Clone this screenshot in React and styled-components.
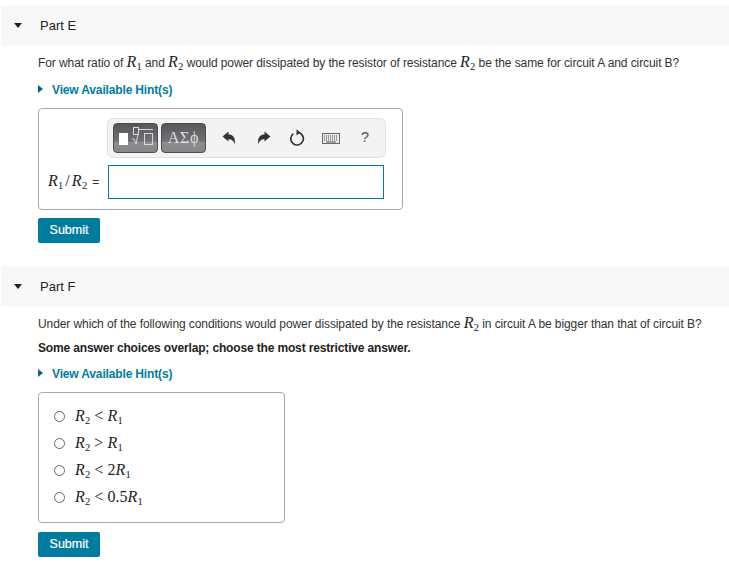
import React from 'react'
import styled, { createGlobalStyle } from 'styled-components'

const GlobalStyle = createGlobalStyle`
  html, body {
    margin: 0;
    background: #fff;
    font-family: "Liberation Sans", Arial, sans-serif;
    color: #333;
  }
`;

const Page = styled.div`
  width: 729px;
  height: 566px;
  overflow: hidden;
  padding-top: 5px;
  box-sizing: border-box;
`;

const PartHeader = styled.div`
  display: flex;
  align-items: center;
  height: 41px;
  margin-left: 1px;
  background: #f8f8f8;
  color: #222;
  font-size: 13px;
  padding-left: 13px;
`;

const Caret = styled.span`
  width: 0;
  height: 0;
  margin-right: 18px;
  margin-top: -1px;
  border-left: 4.5px solid transparent;
  border-right: 4.5px solid transparent;
  border-top: 5px solid #222;
`;

const PartBody = styled.div`
  padding-left: 38px;
  margin-bottom: ${p => p.$gap}px;
`;

const Prompt = styled.p`
  margin: 0;
  height: 17px;
  line-height: 17px;
  font-size: 12px;
  letter-spacing: ${p => (p.$bold ? -0.15 : -0.09)}px;
  font-weight: ${p => (p.$bold ? 700 : 400)};
  color: ${p => (p.$bold ? '#222' : '#333')};
  margin-top: ${p => p.$top}px;
  white-space: nowrap;
`;

const Hint = styled.div`
  display: flex;
  align-items: center;
  height: 16px;
  margin-top: ${p => p.$top}px;
  color: #007c9e;
  font-size: 12px;
  letter-spacing: -0.15px;
  font-weight: 700;
`;

const HintArrow = styled.span`
  width: 0;
  height: 0;
  margin-right: 9px;
  margin-top: -2px;
  border-top: 4.5px solid transparent;
  border-bottom: 4.5px solid transparent;
  border-left: 5px solid #00688b;
`;

const MathText = styled.span`
  font-family: "Liberation Serif", "Times New Roman", serif;
  font-size: ${p => p.$size || 16}px;
  line-height: 0;
  letter-spacing: 0;
  color: #222;
  white-space: nowrap;
  i { font-style: italic; letter-spacing: 0.3px; }
  sub {
    font-size: 0.66em;
    line-height: 0;
    vertical-align: -0.26em;
    font-style: normal;
  }
`;

const Op = styled.span`
  margin: 0 ${p => p.$space || 4}px;
`;

const AnswerBox = styled.div`
  box-sizing: border-box;
  width: ${p => p.$w}px;
  height: ${p => p.$h}px;
  margin-top: ${p => p.$top}px;
  border: 1px solid #a8a8a8;
  border-radius: 4px;
`;

const EditorGrid = styled.div`
  display: grid;
  grid-template-columns: 69px 276px;
  padding-top: 9px;
`;

const Toolbar = styled.div`
  grid-column: 2;
  box-sizing: border-box;
  width: 279px;
  height: 40px;
  margin-left: -1px;
  display: flex;
  align-items: center;
  padding-left: 5px;
  background: #f3f3f3;
  border: 1px solid #e0e0e0;
  border-radius: 6px;
`;

const PaletteButton = styled.div`
  box-sizing: border-box;
  width: 45px;
  height: 30px;
  margin-right: 3px;
  display: flex;
  align-items: center;
  justify-content: center;
  border: 1px solid #4f4f4f;
  border-radius: 4px;
  background: linear-gradient(#58585c 0%, #727276 62%, #8d8d92 64%, #85858a 100%);
  color: #dedede;
  font-family: "Liberation Serif", serif;
  font-size: 16px;
  letter-spacing: 0.8px;
  font-weight: 400;
`;

const ToolIcon = styled.span`
  width: ${p => p.$w}px;
  margin-top: ${p => p.$lift ? -p.$lift : 0}px;
  display: flex;
  justify-content: center;
  align-items: center;
  color: #555;
  font-size: 15px;
`;

const EquationLabel = styled.div`
  align-self: center;
  padding-left: 9px;
  font-size: 12px;
  white-space: nowrap;
`;

const EquationInput = styled.div`
  box-sizing: border-box;
  width: 276px;
  height: 34px;
  border: 1px solid #007c9e;
`;

const EquationRow = styled.div`
  grid-column: 1 / 3;
  display: grid;
  grid-template-columns: 69px 276px;
  margin-top: 7px;
`;

const SubmitButton = styled.button`
  display: block;
  box-sizing: border-box;
  width: 62px;
  height: 25px;
  margin-top: ${p => p.$top}px;
  padding: 0 0 2px;
  background: #007c9e;
  border: none;
  border-radius: 2px;
  color: #fff;
  font-family: "Liberation Sans", Arial, sans-serif;
  font-size: 12.5px;
  font-weight: 400;
  -webkit-text-stroke: 0.2px #fff;
`;

const ChoiceList = styled.div`
  display: flex;
  flex-direction: column;
  padding: 12px 0 0 15px;
`;

const Choice = styled.label`
  display: flex;
  align-items: center;
  height: 27px;
`;

const Radio = styled.span`
  box-sizing: border-box;
  width: 11px;
  height: 11px;
  margin-right: 10px;
  margin-top: -4px;
  border: 1.3px solid #666;
  border-radius: 50%;
  background: #fff;
`;

const MatrixIcon = () => (
  <svg width="43" height="28" viewBox="0 0 43 28" fill="none">
    <rect x="5" y="9" width="9" height="12" fill="#fff" />
    <rect x="19.500" y="3.500" width="5" height="7" stroke="#d8d8d8" />
    <path d="M18 15h2l2 5 3-14.500h14" stroke="#d8d8d8" />
    <rect x="30.500" y="9.500" width="8" height="11" stroke="#d8d8d8" />
  </svg>
);

const UndoIcon = ({ flip }) => (
  <svg width="14" height="14" viewBox="0 0 13 13" style={flip ? { transform: 'scaleX(-1)' } : undefined}>
    <path d="M0.500 5 6 0.500V3.200C10 3.200 12.500 5.500 12 12.500 11 9.500 9.500 7.600 6 7.600V9.800z" fill="#333" />
  </svg>
);

const ResetIcon = () => (
  <svg width="16" height="17" viewBox="0 0 16 17" fill="none">
    <path d="M4.300 4.600a6.300 6.300 0 1 0 4.500-1.200" stroke="#333" strokeWidth="1.700" />
    <path d="M7.500 0.300 11.300 3.400 7.500 6.500z" fill="#333" />
  </svg>
);

const KeyboardIcon = () => (
  <svg width="18" height="11" viewBox="0 0 18 11">
    <rect x="0.500" y="0.500" width="17" height="10" fill="#e8e8e8" stroke="#6a6a6a" />
    <path d="M2 3h14M2 5h14M2 7h14" stroke="#555" strokeDasharray="1 1" />
    <path d="M4 9h10" stroke="#555" />
  </svg>
);

const R = ({ n }) => <><i>R</i><sub>{n}</sub></>;

export default function App() {
  return (
    <Page>
      <GlobalStyle />
      <PartHeader><Caret />Part E</PartHeader>
      <PartBody $gap={23}>
        <Prompt $top={9}>
          For what ratio of <MathText><R n={1} /></MathText> and <MathText><R n={2} /></MathText> would power dissipated by the resistor of resistance <MathText><R n={2} /></MathText> be the same for circuit A and circuit B?
        </Prompt>
        <Hint $top={10}><HintArrow />View Available Hint(s)</Hint>
        <AnswerBox $w={365} $h={102} $top={10}>
          <EditorGrid>
            <Toolbar>
              <PaletteButton><MatrixIcon /></PaletteButton>
              <PaletteButton>ΑΣϕ</PaletteButton>
              <ToolIcon $w={39}><UndoIcon /></ToolIcon>
              <ToolIcon $w={31}><UndoIcon flip /></ToolIcon>
              <ToolIcon $w={36} $lift={2}><ResetIcon /></ToolIcon>
              <ToolIcon $w={32}><KeyboardIcon /></ToolIcon>
              <ToolIcon $w={36} $lift={3}>?</ToolIcon>
            </Toolbar>
            <EquationRow>
              <EquationLabel><MathText><R n={1} /><Op $space={2}>/</Op><R n={2} /></MathText><Op $space={5}>=</Op></EquationLabel>
              <EquationInput />
            </EquationRow>
          </EditorGrid>
        </AnswerBox>
        <SubmitButton $top={8}>Submit</SubmitButton>
      </PartBody>

      <PartHeader><Caret />Part F</PartHeader>
      <PartBody $gap={0}>
        <Prompt $top={9}>
          Under which of the following conditions would power dissipated by the resistance <MathText><R n={2} /></MathText> in circuit A be bigger than that of circuit B?
        </Prompt>
        <Prompt $bold $top={7}>Some answer choices overlap; choose the most restrictive answer.</Prompt>
        <Hint $top={9}><HintArrow />View Available Hint(s)</Hint>
        <AnswerBox $w={247} $h={131} $top={10}>
          <ChoiceList>
            <Choice><Radio /><MathText><R n={2} /><Op>&lt;</Op><R n={1} /></MathText></Choice>
            <Choice><Radio /><MathText><R n={2} /><Op>&gt;</Op><R n={1} /></MathText></Choice>
            <Choice><Radio /><MathText><R n={2} /><Op>&lt;</Op>2<R n={1} /></MathText></Choice>
            <Choice><Radio /><MathText><R n={2} /><Op>&lt;</Op>0.5<R n={1} /></MathText></Choice>
          </ChoiceList>
        </AnswerBox>
        <SubmitButton $top={9}>Submit</SubmitButton>
      </PartBody>
    </Page>
  )
}
